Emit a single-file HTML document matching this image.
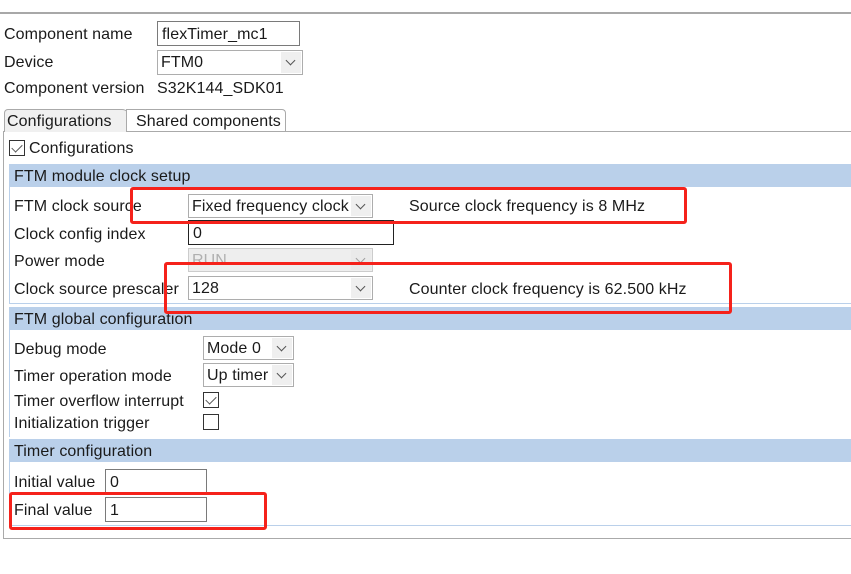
<!DOCTYPE html>
<html><head><meta charset="utf-8"><style>
*{margin:0;padding:0;box-sizing:border-box}
body{width:851px;height:574px;background:#fff;position:relative;overflow:hidden;font-family:"Liberation Sans","Noto Sans CJK SC",sans-serif;font-size:16px;letter-spacing:0.1px;color:#1a1a1a}
.a{position:absolute}
.t{position:absolute;line-height:20px;white-space:nowrap}
.in{position:absolute;border:1px solid #7a7a7a;background:#fff;padding-left:4px;padding-top:1px;line-height:23px;white-space:nowrap}
.sel{position:absolute;border:1px solid #adadad;background:#fff;padding-left:3px;line-height:23px;white-space:nowrap;overflow:hidden}
.sel .ar{position:absolute;right:1px;top:1px;bottom:1px;width:20px;background:#efefef}
.sel .ar:after{content:"";position:absolute;left:6px;top:5px;width:6px;height:6px;border-right:1.5px solid #555;border-bottom:1.5px solid #555;transform:rotate(45deg)}
.hd{position:absolute;left:9px;right:0;height:23px;background:#bad0ea;padding-left:5px;line-height:25px}
.cb{position:absolute;width:16px;height:16px;border:1px solid #333;background:#fff}
.cb.c:after{content:"";position:absolute;left:4px;top:1px;width:5px;height:9px;border-right:1.5px solid #555;border-bottom:1.5px solid #555;transform:rotate(45deg)}
.red{position:absolute;border:3px solid #f5221b;border-radius:3px}
</style></head><body>
<div class="a" style="left:0;right:0;top:12px;height:2px;background:#a8a8a8"></div>
<div class="t" style="left:4px;top:25px">Component name</div>
<div class="in" style="left:157px;top:21px;width:143px;height:25px">flexTimer_mc1</div>
<div class="t" style="left:4px;top:53px">Device</div>
<div class="sel" style="left:157px;top:50px;width:146px;height:25px">FTM0<div class="ar"></div></div>
<div class="t" style="left:4px;top:79px">Component version</div>
<div class="t" style="left:157px;top:79px">S32K144_SDK01</div>
<!-- tabs -->
<div class="a" style="left:4px;top:109px;width:126px;height:23px;border:1px solid #aaa;border-bottom:none;border-radius:4px 8px 0 0;background:#f0f0f0"></div>
<div class="a" style="left:126px;top:109px;width:160px;height:22px;border:1px solid #aaa;border-bottom:none;border-radius:0 4px 0 0;background:#fff"></div>
<div class="t" style="left:7px;top:112px">Configurations</div>
<div class="t" style="left:136px;top:112px">Shared components</div>
<div class="a" style="left:126px;right:0;top:131px;height:1px;background:#aaa"></div>
<div class="a" style="left:3px;top:131px;width:1px;height:408px;background:#aaa"></div>
<div class="a" style="left:3px;right:0;top:538px;height:1px;background:#aaa"></div>
<div class="cb c" style="left:9px;top:140px"></div>
<div class="t" style="left:29px;top:139px">Configurations</div>
<!-- section 1 -->
<div class="a" style="left:9px;top:164px;width:1px;height:140px;background:#bad0ea"></div>
<div class="hd" style="top:164px">FTM module clock setup</div>
<div class="a" style="left:9px;right:0;top:303px;height:1px;background:#bad0ea"></div>
<div class="t" style="left:14px;top:197px">FTM clock source</div>
<div class="sel" style="left:188px;top:194px;width:185px;height:24px">Fixed frequency clock<div class="ar"></div></div>
<div class="t" style="left:409px;top:197px">Source clock frequency is 8 MHz</div>
<div class="t" style="left:14px;top:225px">Clock config index</div>
<div class="in" style="left:188px;top:220px;width:206px;height:25px;border-color:#222">0</div>
<div class="t" style="left:14px;top:252px">Power mode</div>
<div class="sel" style="left:188px;top:248px;width:185px;height:24px;background:#eee;color:#b0b0b0;border-color:#ccc">RUN<div class="ar" style="background:#e8e8e8;opacity:.5"></div></div>
<div class="t" style="left:14px;top:280px">Clock source prescaler</div>
<div class="sel" style="left:188px;top:276px;width:185px;height:24px">128<div class="ar"></div></div>
<div class="t" style="left:409px;top:280px">Counter clock frequency is 62.500 kHz</div>
<!-- section 2 -->
<div class="a" style="left:9px;top:307px;width:1px;height:130px;background:#bad0ea"></div>
<div class="hd" style="top:307px">FTM global configuration</div>
<div class="t" style="left:14px;top:340px">Debug mode</div>
<div class="sel" style="left:203px;top:336px;width:91px;height:24px">Mode 0<div class="ar"></div></div>
<div class="t" style="left:14px;top:367px">Timer operation mode</div>
<div class="sel" style="left:203px;top:363px;width:91px;height:24px">Up timer<div class="ar"></div></div>
<div class="t" style="left:14px;top:392px">Timer overflow interrupt</div>
<div class="cb c" style="left:203px;top:392px"></div>
<div class="t" style="left:14px;top:414px">Initialization trigger</div>
<div class="cb" style="left:203px;top:414px"></div>
<!-- section 3 -->
<div class="a" style="left:9px;top:439px;width:1px;height:87px;background:#bad0ea"></div>
<div class="hd" style="top:439px">Timer configuration</div>
<div class="a" style="left:9px;right:0;top:525px;height:1px;background:#bad0ea"></div>
<div class="t" style="left:14px;top:473px">Initial value</div>
<div class="in" style="left:105px;top:469px;width:102px;height:25px">0</div>
<div class="t" style="left:14px;top:501px">Final value</div>
<div class="in" style="left:105px;top:497px;width:102px;height:25px">1</div>
<!-- red boxes -->
<div class="red" style="left:130px;top:187px;width:557px;height:37px"></div>
<div class="red" style="left:164px;top:262px;width:568px;height:52px"></div>
<div class="red" style="left:9px;top:492px;width:258px;height:38px"></div>
</body></html>
